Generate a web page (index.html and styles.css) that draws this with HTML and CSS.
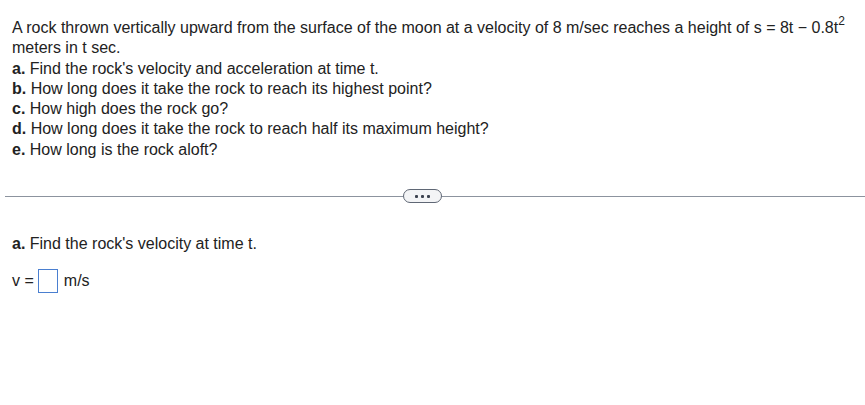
FILE: index.html
```html
<!DOCTYPE html>
<html>
<head>
<meta charset="utf-8">
<link rel="stylesheet" href="styles.css">
</head>
<body>
<div class="question">
  <div class="text">A rock thrown vertically upward from the surface of the moon at a velocity of 8 m/sec reaches a height of s = 8t &minus; 0.8t<sup>2</sup></div>
  <div class="text">meters in t sec.</div>
  <div class="text"><b>a.</b> Find the rock's velocity and acceleration at time t.</div>
  <div class="text"><b>b.</b> How long does it take the rock to reach its highest point?</div>
  <div class="text"><b>c.</b> How high does the rock go?</div>
  <div class="text"><b>d.</b> How long does it take the rock to reach half its maximum height?</div>
  <div class="text"><b>e.</b> How long is the rock aloft?</div>
</div>
<div class="divider">
  <div class="line left"></div>
  <div class="more"><span class="dot"></span><span class="dot"></span><span class="dot"></span></div>
  <div class="line"></div>
</div>
<div class="part">
  <div class="text"><b>a.</b> Find the rock's velocity at time t.</div>
  <div class="answer"><span>v =</span><span class="box"></span><span>m/s</span></div>
</div>
</body>
</html>
```
FILE: styles.css
```css
html, body { margin: 0; padding: 0; background: #fff; }
body {
  font-family: "Liberation Sans", Arial, sans-serif;
  font-size: 16px;
  color: #222;
  width: 865px;
  height: 405px;
  overflow: hidden;
}
.question { padding: 18px 0 0 12px; }
.text { line-height: 20.3px; white-space: nowrap; }
sup { font-size: 12px; line-height: 0; vertical-align: 8px; }
b { font-weight: bold; }
.divider {
  display: flex;
  align-items: center;
  margin: 29px 0 0 5px;
  height: 14px;
}
.line { flex: 1; height: 1px; background: #8c939e; }
.line.left { flex: 0 0 398px; }
.more {
  width: 37px;
  height: 12px;
  border: 1px solid #5f6775;
  border-radius: 7px;
  background: #f3f4f6;
  display: flex;
  align-items: center;
  justify-content: center;
  gap: 3px;
}
.dot { width: 3px; height: 3px; background: #3c4350; border-radius: 1px; }
.part { padding: 31px 0 0 12px; }
.answer {
  display: flex;
  align-items: center;
  gap: 4px;
  margin-top: 15px;
}
.box {
  width: 18px;
  height: 22px;
  border: 1px solid #4a7fd0;
  margin-right: 2px;
}
```
